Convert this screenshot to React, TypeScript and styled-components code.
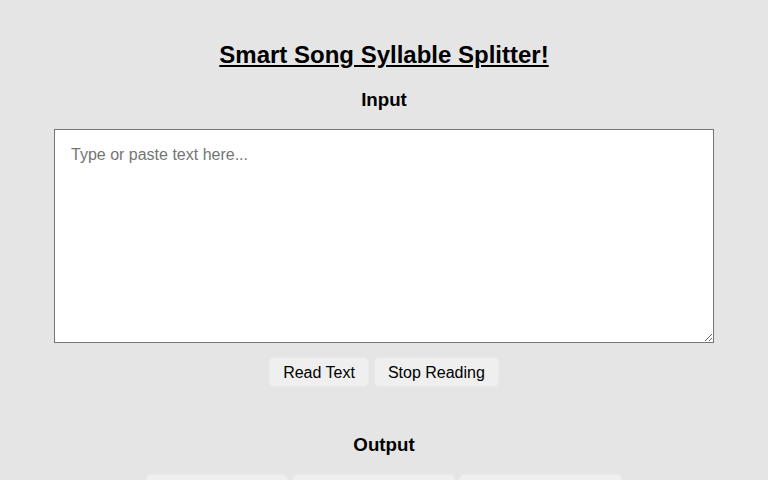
import React, { useState } from "react";
import styled, { createGlobalStyle } from "styled-components";

const GlobalStyle = createGlobalStyle`
  body {
    margin: 0;
    background: #e5e5e5;
    font-family: "Liberation Sans", Arial, sans-serif;
    color: #000;
  }
`;

const Page = styled.div`
  display: flex;
  flex-direction: column;
  align-items: center;
  width: 660px;
  margin: 0 auto;
  padding-top: 41px;
`;

const Title = styled.h2`
  margin: 0 0 20px;
  font-size: 24px;
  line-height: 28px;
  font-weight: bold;
  text-decoration: underline;
`;

const Heading = styled.h3<{ $top?: number }>`
  margin: ${(p) => p.$top ?? 0}px 0 18px;
  font-size: 18.72px;
  line-height: 22px;
  font-weight: bold;
`;

const TextBox = styled.textarea`
  display: block;
  box-sizing: border-box;
  width: 100%;
  height: 214px;
  margin: 0;
  padding: 16px;
  border: 1px solid #767676;
  border-radius: 0;
  background: #fff;
  font-family: "Liberation Sans", Arial, sans-serif;
  font-size: 16px;
  color: #000;
  resize: both;
  outline: none;

  &::placeholder {
    color: #757575;
  }
`;

const ButtonRow = styled.div<{ $gap: number; $top?: number }>`
  display: flex;
  justify-content: center;
  gap: ${(p) => p.$gap}px;
  margin-top: ${(p) => p.$top ?? 0}px;
`;

const Button = styled.button<{ $width?: number }>`
  box-sizing: border-box;
  ${(p) => (p.$width ? `width: ${p.$width}px;` : "")}
  height: 30px;
  padding: 1px 13px 0;
  border: 1px solid #e9e9e9;
  border-radius: 5px;
  background: #efefef;
  font-family: "Liberation Sans", Arial, sans-serif;
  font-size: 16px;
  color: #000;
  cursor: pointer;
  white-space: nowrap;
`;

export default function App() {
  const [text, setText] = useState("");

  return (
    <>
      <GlobalStyle />
      <Page>
        <Title>Smart Song Syllable Splitter!</Title>
        <Heading>Input</Heading>
        <TextBox
          placeholder="Type or paste text here..."
          value={text}
          onChange={(e) => setText(e.target.value)}
        />
        <ButtonRow $gap={5} $top={14}>
          <Button>Read Text</Button>
          <Button>Stop Reading</Button>
        </ButtonRow>
        <Heading $top={47}>Output</Heading>
        <ButtonRow $gap={4}>
          <Button $width={142}>Copy Output</Button>
          <Button $width={163}>Download Output</Button>
          <Button $width={163}>Clear Everything</Button>
        </ButtonRow>
      </Page>
    </>
  );
}
